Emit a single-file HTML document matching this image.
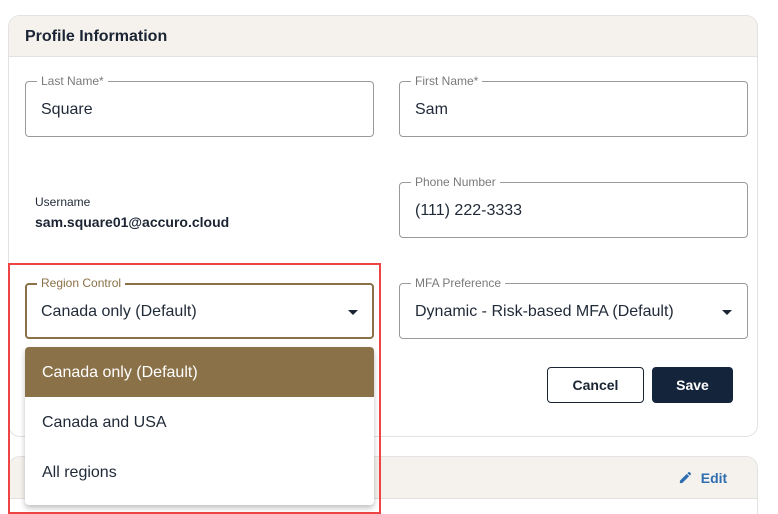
<!DOCTYPE html>
<html><head><style>
*{box-sizing:border-box;margin:0;padding:0}
html,body{width:778px;height:514px;overflow:hidden}
body{background:#fff;font-family:"Liberation Sans",Arial,sans-serif;position:relative;color:#1f2937}
.card{position:absolute;left:8px;width:750px;border:1px solid #e2e2e2;border-radius:12px;background:#fff;overflow:hidden}
.hdr{background:#f5f2ee;border-bottom:1px solid #e2e2e2;height:41px;padding:0 16px;font-weight:bold;font-size:16px;line-height:42px;color:#1a2433}
.f{position:absolute;border:1px solid #9a9a9a;border-radius:4px;height:56px;width:349px}
.f .l{position:absolute;top:-8px;left:11px;background:#fff;padding:0 4px;font-size:12px;color:#7a7a7a;line-height:14px}
.f .v{position:absolute;left:15px;top:19px;font-size:16px;color:#1f2937}
.arr{position:absolute;right:15px;top:26px;width:0;height:0;border-left:5px solid transparent;border-right:5px solid transparent;border-top:5px solid #1a2433}
.btn{position:absolute;top:367px;height:36px;border-radius:4px;font-weight:bold;font-size:14px;text-align:center;line-height:34px}
</style></head><body>
<div class="card" style="top:15px;height:422px"><div class="hdr">Profile Information</div></div>
<div class="card" style="top:456px;height:70px"><div class="hdr" style="height:42px"></div></div>
<div style="position:absolute;left:678px;top:469px;color:#2f6fb0;font-size:14px;font-weight:bold;line-height:18px">
<svg width="15" height="15" viewBox="0 0 24 24" style="vertical-align:-2px"><path fill="#2f6fb0" d="M3 17.25V21h3.75L17.81 9.94l-3.75-3.75L3 17.25zM20.71 7.04a1 1 0 0 0 0-1.41l-2.34-2.34a1 1 0 0 0-1.41 0l-1.83 1.83 3.75 3.75 1.83-1.83z"/></svg>&nbsp; Edit</div>

<div class="f" style="left:25px;top:81px"><span class="l">Last Name*</span><span class="v">Square</span></div>
<div class="f" style="left:399px;top:81px"><span class="l">First Name*</span><span class="v">Sam</span></div>
<div style="position:absolute;left:35px;top:195px;font-size:12px;color:#1f2937">Username</div>
<div style="position:absolute;left:35px;top:214px;font-size:14px;font-weight:bold;color:#1a2433">sam.square01@accuro.cloud</div>
<div class="f" style="left:399px;top:182px"><span class="l">Phone Number</span><span class="v">(111) 222-3333</span></div>
<div class="f" style="left:25px;top:283px;border:2px solid #8a7148"><span class="l" style="top:-9px;left:10px;color:#8a7148">Region Control</span><span class="v" style="left:14px;top:18px">Canada only (Default)</span><span class="arr" style="right:14px;top:25px"></span></div>
<div class="f" style="left:399px;top:283px"><span class="l">MFA Preference</span><span class="v">Dynamic - Risk-based MFA (Default)</span><span class="arr"></span></div>
<div class="btn" style="left:547px;width:97px;border:1px solid #1a2433;background:#fff;color:#1a2433">Cancel</div>
<div class="btn" style="left:652px;width:81px;background:#14243a;color:#fff;line-height:36px">Save</div>

<div style="position:absolute;left:25px;top:347px;width:349px;height:158px;background:#fff;border-radius:4px;box-shadow:0 3px 6px rgba(0,0,0,.25);overflow:hidden;font-size:16px">
<div style="height:50px;background:#8a7148;color:#fff;padding-left:17px;line-height:52px">Canada only (Default)</div>
<div style="height:50px;padding-left:17px;line-height:52px">Canada and USA</div>
<div style="height:50px;padding-left:17px;line-height:52px">All regions</div>
</div>
<div style="position:absolute;left:8px;top:263px;width:373px;height:251px;border:2px solid #ef4444"></div>
</body></html>
